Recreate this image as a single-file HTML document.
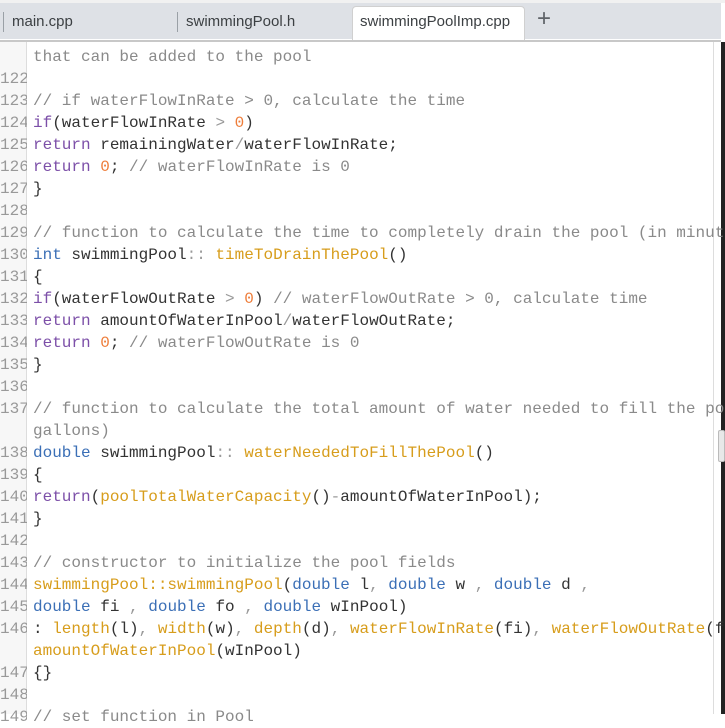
<!DOCTYPE html>
<html><head><meta charset="utf-8"><style>
*{margin:0;padding:0;box-sizing:border-box}
body{width:725px;height:714px;overflow:hidden;background:#fff;position:relative;font-family:"Liberation Sans",sans-serif}
.top{position:absolute;left:0;top:0;width:725px;height:3px;background:#f1f1f1}
.bar{position:absolute;left:0;top:3px;width:721px;height:36px;background:#dee1e6}
.barline{position:absolute;left:0;top:40px;width:721px;height:2px;background:#c8c8c8}
.tab{position:absolute;top:13px;font-size:15px;color:#3c4043}
.sep{position:absolute;top:12px;width:1px;height:20px;background:#9aa0a6}
.active{position:absolute;left:352px;top:6px;width:173px;height:34px;background:#fff;border-radius:4px 4px 0 0;border:1px solid #d0d0d0;border-bottom:none}
.plus{position:absolute;left:537px;top:5px;font-size:24px;color:#5f6368}
.gutter{position:absolute;left:0;top:42px;width:27px;height:672px;background:#f7f7f7;border-right:1px solid #ddd}
.ln{position:absolute;left:0;width:27px;overflow:hidden;font-family:"Liberation Mono",monospace;font-size:16px;color:#999;line-height:22px;white-space:nowrap}
.cl{position:absolute;left:33px;font-family:"Liberation Mono",monospace;font-size:16px;line-height:22px;white-space:pre;color:#333}
.c{color:#8a8a8a}.k{color:#3b6fb6}.f{color:#d79d1c}.n{color:#ee7d3a}.r{color:#7c4fa8}.p{color:#999}
.rl{position:absolute;left:713px;top:42px;width:1px;height:672px;background:#ddd}
.rb{position:absolute;left:721px;top:42px;width:4px;height:672px;background:#222}
.th{position:absolute;left:718px;top:430px;width:7px;height:32px;background:#e8e8e8;border:1px solid #bbb;border-radius:2px}
#w{position:absolute;left:0;top:1px;width:725px;height:714px}
</style></head><body>
<div class="top"></div><div class="bar"></div><div class="barline"></div>
<div class="sep" style="left:3px"></div>
<div class="tab" style="left:12px">main.cpp</div>
<div class="sep" style="left:177px"></div>
<div class="tab" style="left:186px">swimmingPool.h</div>
<div class="active"></div>
<div class="tab" style="left:360px">swimmingPoolImp.cpp</div>
<div class="plus">+</div>
<div class="gutter"></div>
<div class="rl"></div><div class="rb"></div><div class="th"></div>
<div id="w">
<div class="ln" style="top:67px">122</div>
<div class="ln" style="top:89px">123</div>
<div class="ln" style="top:111px">124</div>
<div class="ln" style="top:133px">125</div>
<div class="ln" style="top:155px">126</div>
<div class="ln" style="top:177px">127</div>
<div class="ln" style="top:199px">128</div>
<div class="ln" style="top:221px">129</div>
<div class="ln" style="top:243px">130</div>
<div class="ln" style="top:265px">131</div>
<div class="ln" style="top:287px">132</div>
<div class="ln" style="top:309px">133</div>
<div class="ln" style="top:331px">134</div>
<div class="ln" style="top:353px">135</div>
<div class="ln" style="top:375px">136</div>
<div class="ln" style="top:397px">137</div>
<div class="ln" style="top:441px">138</div>
<div class="ln" style="top:463px">139</div>
<div class="ln" style="top:485px">140</div>
<div class="ln" style="top:507px">141</div>
<div class="ln" style="top:529px">142</div>
<div class="ln" style="top:551px">143</div>
<div class="ln" style="top:573px">144</div>
<div class="ln" style="top:595px">145</div>
<div class="ln" style="top:617px">146</div>
<div class="ln" style="top:661px">147</div>
<div class="ln" style="top:683px">148</div>
<div class="ln" style="top:705px">149</div>

<div class="cl c" style="top:45px">that can be added to the pool</div>
<div class="cl c" style="top:89px">// if waterFlowInRate &gt; 0, calculate the time</div>
<div class="cl" style="top:111px"><span class="r">if</span>(waterFlowInRate <span class="p">&gt;</span> <span class="n">0</span>)</div>
<div class="cl" style="top:133px"><span class="r">return</span> remainingWater<span class="p">/</span>waterFlowInRate;</div>
<div class="cl" style="top:155px"><span class="r">return</span> <span class="n">0</span>; <span class="c">// waterFlowInRate is 0</span></div>
<div class="cl" style="top:177px">}</div>
<div class="cl c" style="top:221px">// function to calculate the time to completely drain the pool (in minutes)</div>
<div class="cl" style="top:243px"><span class="k">int</span> swimmingPool<span class="p">::</span> <span class="f">timeToDrainThePool</span>()</div>
<div class="cl" style="top:265px">{</div>
<div class="cl" style="top:287px"><span class="r">if</span>(waterFlowOutRate <span class="p">&gt;</span> <span class="n">0</span>) <span class="c">// waterFlowOutRate &gt; 0, calculate time</span></div>
<div class="cl" style="top:309px"><span class="r">return</span> amountOfWaterInPool<span class="p">/</span>waterFlowOutRate;</div>
<div class="cl" style="top:331px"><span class="r">return</span> <span class="n">0</span>; <span class="c">// waterFlowOutRate is 0</span></div>
<div class="cl" style="top:353px">}</div>
<div class="cl c" style="top:397px">// function to calculate the total amount of water needed to fill the pool</div>
<div class="cl c" style="top:419px">gallons)</div>
<div class="cl" style="top:441px"><span class="k">double</span> swimmingPool<span class="p">::</span> <span class="f">waterNeededToFillThePool</span>()</div>
<div class="cl" style="top:463px">{</div>
<div class="cl" style="top:485px"><span class="r">return</span>(<span class="f">poolTotalWaterCapacity</span>()<span class="p">-</span>amountOfWaterInPool);</div>
<div class="cl" style="top:507px">}</div>
<div class="cl c" style="top:551px">// constructor to initialize the pool fields</div>
<div class="cl" style="top:573px"><span class="f">swimmingPool::swimmingPool</span>(<span class="k">double</span> l<span class="p">,</span> <span class="k">double</span> w <span class="p">,</span> <span class="k">double</span> d <span class="p">,</span></div>
<div class="cl" style="top:595px"><span class="k">double</span> fi <span class="p">,</span> <span class="k">double</span> fo <span class="p">,</span> <span class="k">double</span> wInPool)</div>
<div class="cl" style="top:617px">: <span class="f">length</span>(l)<span class="p">,</span> <span class="f">width</span>(w)<span class="p">,</span> <span class="f">depth</span>(d)<span class="p">,</span> <span class="f">waterFlowInRate</span>(fi)<span class="p">,</span> <span class="f">waterFlowOutRate</span>(fo),</div>
<div class="cl" style="top:639px"><span class="f">amountOfWaterInPool</span>(wInPool)</div>
<div class="cl" style="top:661px">{}</div>
<div class="cl c" style="top:705px">// set function in Pool</div>
</div>
</body></html>
